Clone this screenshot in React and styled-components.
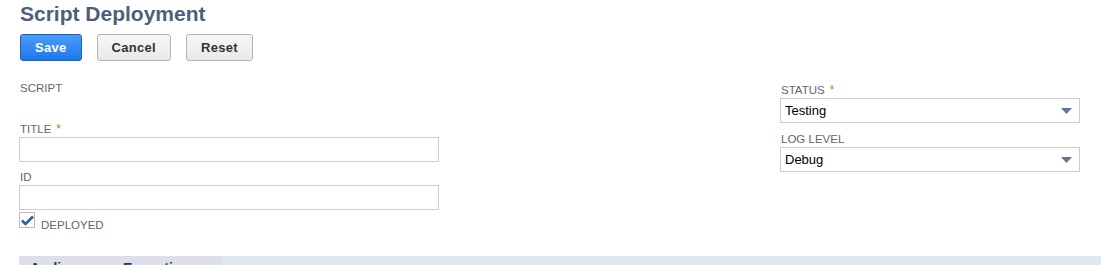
import React from "react";
import styled, { createGlobalStyle } from "styled-components";

const Global = createGlobalStyle`
  html, body { margin: 0; padding: 0; overflow: hidden; background: #fff; }
  body { font-family: "Liberation Sans", Arial, sans-serif; }
`;

const Page = styled.div`
  width: 1101px;
  height: 265px;
  overflow: hidden;
`;

const Header = styled.div`
  padding: 0 20px;
`;

const Heading = styled.h1`
  margin: 0;
  font-size: 21px;
  line-height: 28px;
  font-weight: bold;
  color: #4d5f79;
`;

const ButtonBar = styled.div`
  display: flex;
  gap: 15px;
  margin-top: 6px;
`;

const Button = styled.button`
  height: 27px;
  padding: 0 14px;
  border-radius: 3px;
  font-family: "Liberation Sans", Arial, sans-serif;
  font-size: 13px;
  font-weight: bold;
  letter-spacing: 0.3px;
  cursor: pointer;
  border: 1px solid ${(p) => (p.$primary ? "#1d5fbf" : "#b4b4b4")};
  color: ${(p) => (p.$primary ? "#ffffff" : "#333333")};
  background: ${(p) =>
    p.$primary
      ? "linear-gradient(#4a9cf9, #1f78ea)"
      : "linear-gradient(#f7f7f7, #e9e9e9)"};
`;

const Form = styled.div`
  display: flex;
  justify-content: space-between;
  padding: 20px 21px 0 19px;
`;

const Column = styled.div`
  display: flex;
  flex-direction: column;
  width: ${(p) => p.$width}px;
  padding-top: ${(p) => p.$offset || 0}px;
`;

const Field = styled.div`
  display: flex;
  flex-direction: column;
  margin-bottom: ${(p) => p.$gap ?? 9}px;
`;

const Label = styled.label`
  font-size: 11.5px;
  line-height: 13px;
  height: 13px;
  color: #666666;
  text-transform: uppercase;
  padding-left: 1px;
  margin-bottom: 1px;
`;

const Required = styled.span`
  color: #c67f00;
  margin-left: 5px;
  font-size: 12px;
`;

const StaticValue = styled.div`
  height: 27px;
`;

const Input = styled.input`
  box-sizing: border-box;
  width: 100%;
  height: 25px;
  border: 1px solid #cccccc;
  margin: 0;
  padding: 0 4px;
  font-family: "Liberation Sans", Arial, sans-serif;
  font-size: 13px;
  outline: none;
`;

const Select = styled.div`
  box-sizing: border-box;
  height: 25px;
  border: 1px solid #cccccc;
  display: flex;
  align-items: center;
  justify-content: space-between;
  padding: 0 7px 0 4px;
  font-size: 13px;
  color: #000;
`;

const CheckRow = styled.div`
  display: flex;
  align-items: flex-start;
  gap: 6px;
  margin-top: -7px;
`;

const CheckBox = styled.div`
  box-sizing: border-box;
  width: 16px;
  height: 16px;
  border: 1px solid #bcbcbc;
  display: flex;
  align-items: center;
  justify-content: center;
`;

const CheckLabel = styled.span`
  font-size: 11.5px;
  line-height: 13px;
  color: #666666;
  text-transform: uppercase;
  margin-top: 7px;
`;

const TabBar = styled.div`
  display: flex;
  margin: 24px 0 0 19px;
  height: 30px;
  background: #e1e7f0;
`;

const Tab = styled.div`
  display: flex;
  gap: 30px;
  padding: 4px 11px 0;
  width: 203px;
  box-sizing: border-box;
  background: ${(p) => (p.$active ? "#dcdfe7" : "transparent")};
  font-size: 14px;
  font-weight: bold;
  color: #24385b;
`;

const Arrow = () => (
  <svg width="11" height="6" viewBox="0 0 11 6">
    <path d="M0 0 H11 L5.5 6 Z" fill="#5f7699" />
  </svg>
);

export default function App() {
  return (
    <Page>
      <Global />
      <Header>
        <Heading>Script Deployment</Heading>
        <ButtonBar>
          <Button $primary>Save</Button>
          <Button>Cancel</Button>
          <Button>Reset</Button>
        </ButtonBar>
      </Header>
      <Form>
        <Column $width={420} $offset={1}>
          <Field $gap={0}>
            <Label>Script</Label>
            <StaticValue />
          </Field>
          <Field>
            <Label>
              Title<Required>*</Required>
            </Label>
            <Input />
          </Field>
          <Field>
            <Label>ID</Label>
            <Input />
          </Field>
          <CheckRow>
            <CheckBox>
              <svg width="13" height="11" viewBox="0 0 13 11">
                <path
                  d="M1 5.5 L4.5 9 L12 1.5"
                  stroke="#2b5ea8"
                  strokeWidth="2.6"
                  fill="none"
                />
              </svg>
            </CheckBox>
            <CheckLabel>Deployed</CheckLabel>
          </CheckRow>
        </Column>
        <Column $width={300} $offset={3}>
          <Field $gap={10}>
            <Label>
              Status<Required>*</Required>
            </Label>
            <Select>
              Testing
              <Arrow />
            </Select>
          </Field>
          <Field>
            <Label>Log Level</Label>
            <Select>
              Debug
              <Arrow />
            </Select>
          </Field>
        </Column>
      </Form>
      <TabBar>
        <Tab $active>
          <span>Audience</span>
          <span>Execution Log</span>
        </Tab>
      </TabBar>
    </Page>
  );
}
